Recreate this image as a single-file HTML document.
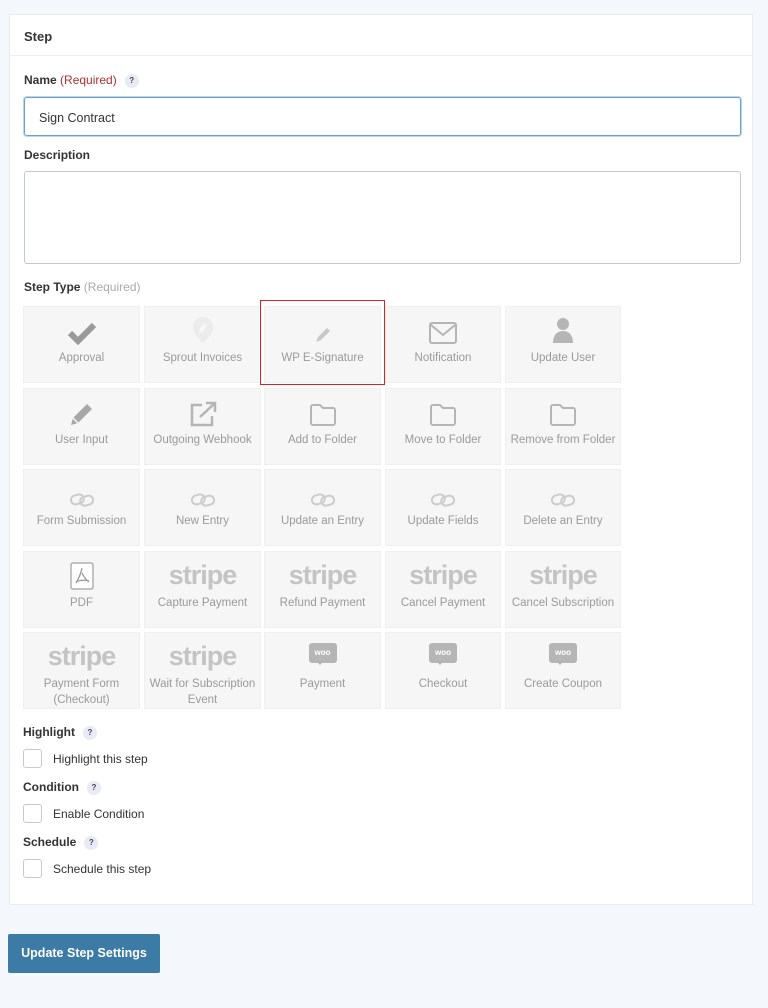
<!DOCTYPE html>
<html><head><style>
body{margin:0;background:#f4f7fb;font-family:"Liberation Sans",sans-serif;width:768px;height:1008px;position:relative;overflow:hidden;color:#333}
.card{position:absolute;left:9px;top:14px;width:744px;height:891px;background:#fff;border:1px solid #e8ebef;box-sizing:border-box}
.hdr{position:absolute;left:14px;top:14px;font-size:13px;font-weight:bold;color:#333}
.sep{position:absolute;left:0;right:0;top:40px;border-top:1px solid #eceef1}
.lbl{position:absolute;left:14px;font-size:12px;font-weight:bold;color:#333}
.q{display:inline-block;width:14px;height:14px;border-radius:7px;background:#e8eaf4;color:#445;font-size:8px;text-align:center;line-height:14px;margin-left:8px;vertical-align:1px}
.inp{position:absolute;left:14px;width:717px;border:1px solid #c3c8d0;border-radius:3px;box-sizing:border-box}
.tile{position:absolute;width:117px;height:77px;background:#f6f6f6;border:1px solid #efefef;box-sizing:border-box;text-align:center;color:#9a9a9a;font-size:11.5px}
.tile .ic{height:38px;display:flex;align-items:flex-end;justify-content:center}
.tile .t{margin-top:5px;line-height:16px}
.stripe{font-weight:bold;font-size:27px;color:#c4c4c4;letter-spacing:-1px;line-height:30px}
.woo{width:28px;height:20px;background:#b5b5b5;border-radius:3px;color:#fff;font-size:8px;line-height:20px;font-weight:bold;margin-bottom:8px;position:relative}
.woo:after{content:"";position:absolute;left:8px;bottom:-5px;border:3px solid transparent;border-top:3px solid #b5b5b5}
.cb{position:absolute;left:14px;width:19px;height:19px;border:1px solid #c8c8d0;border-radius:3px;box-sizing:border-box;background:#fff}
.cbl{position:absolute;left:44px;font-size:12px;color:#333}
.btn{position:absolute;left:8px;top:934px;width:152px;height:39px;background:#3b7ba6;border-radius:2px;color:#fff;font-weight:bold;font-size:12.5px;text-align:center;line-height:39px}
</style></head><body>
<div class="card">
<div class="hdr">Step</div><div class="sep"></div>
<div class="lbl" style="top:58px">Name <span style="color:#b03030;font-weight:normal">(Required)</span><span class="q">?</span></div>
<div class="inp" style="top:82px;height:39px;border:1px solid #6aa0cc;box-shadow:0 0 0 1px #bcd6ec;font-size:12.5px;padding:13px 0 0 14px;color:#333">Sign Contract</div>
<div class="lbl" style="top:133px">Description</div>
<div class="inp" style="top:156px;height:93px"></div>
<div class="lbl" style="top:265px">Step Type <span style="color:#aaa;font-weight:normal">(Required)</span></div>
</div>
<div style="position:absolute;left:260px;top:300px;width:125px;height:85px;border:1.5px solid #e02020;box-sizing:border-box;z-index:2"></div>
<div id="g"></div>
<script>
var cols=[23,144,264,385,505],rows=[306,388,469,551,632];
var g='#b5b5b5';
var I={
chk:'<svg width="30" height="24" viewBox="0 0 30 24"><path d="M3 12l8 8L27 4" stroke="#9a9a9a" stroke-width="6" fill="none"/></svg>',
sprout:'<svg width="24" height="30" viewBox="0 0 24 30"><path d="M12 2a10 10 0 0 1 10 10c0 8-10 16-10 16S2 20 2 12A10 10 0 0 1 12 2z" fill="#ececec"/><path d="M8 18c0-6 4-9 8-10-1 5-3 9-8 10z" fill="#f7f7f7"/></svg>',
pen2:'<svg width="20" height="20" viewBox="0 0 20 20"><path d="M3 17l2-5 9-9 3 3-9 9z" fill="#c8c8c8"/></svg>',
mail:'<svg width="30" height="24" viewBox="0 0 30 24"><rect x="2" y="2" width="26" height="20" rx="2" fill="none" stroke="'+g+'" stroke-width="2"/><path d="M3 4l12 10 12-10" fill="none" stroke="'+g+'" stroke-width="2"/></svg>',
user:'<svg width="24" height="28" viewBox="0 0 24 28"><circle cx="12" cy="7" r="6" fill="'+g+'"/><path d="M2 26c0-8 4-12 10-12s10 4 10 12z" fill="'+g+'"/></svg>',
pen:'<svg width="26" height="26" viewBox="0 0 26 26"><path d="M2 24l2-7L18 3l5 5L9 22z" fill="#a8a8a8"/><path d="M4 17l5 5" stroke="#f6f6f6" stroke-width="1.5"/></svg>',
ext:'<svg width="30" height="26" viewBox="0 0 30 26"><path d="M14 4H4v20h20V15" fill="none" stroke="'+g+'" stroke-width="2.5"/><path d="M12 16L26 3M18 2h9v9" fill="none" stroke="'+g+'" stroke-width="2.5"/></svg>',
fold:'<svg width="28" height="24" viewBox="0 0 28 24"><path d="M2 4a2 2 0 0 1 2-2h7l3 3h10a2 2 0 0 1 2 2v13a2 2 0 0 1-2 2H4a2 2 0 0 1-2-2z" fill="none" stroke="'+g+'" stroke-width="2"/></svg>',
link:'<svg width="26" height="16" viewBox="0 0 26 16"><rect x="2" y="3" width="13" height="9" rx="4.5" fill="none" stroke="#ccc" stroke-width="2" transform="rotate(-15 8 8)"/><rect x="11" y="4" width="13" height="9" rx="4.5" fill="none" stroke="#ccc" stroke-width="2" transform="rotate(-15 18 8)"/></svg>',
pdf:'<svg width="24" height="28" viewBox="0 0 24 28"><rect x="1" y="1" width="22" height="26" rx="2" fill="#fff" stroke="#b0b0b0" stroke-width="1.5"/><path d="M12 6c-1 5-3 10-6 15M12 11c2 4 4 7 7 9M6 20c4-2 9-2 13-1" fill="none" stroke="#999" stroke-width="1.3"/></svg>',
stripe:'<div class="stripe">stripe</div>',
woo:'<div class="woo">woo</div>'};
var T=[['chk','Approval'],['sprout','Sprout Invoices'],['pen2','WP E-Signature'],['mail','Notification'],['user','Update User'],
['pen','User Input'],['ext','Outgoing Webhook'],['fold','Add to Folder'],['fold','Move to Folder'],['fold','Remove from Folder'],
['link','Form Submission'],['link','New Entry'],['link','Update an Entry'],['link','Update Fields'],['link','Delete an Entry'],
['pdf','PDF'],['stripe','Capture Payment'],['stripe','Refund Payment'],['stripe','Cancel Payment'],['stripe','Cancel Subscription'],
['stripe','Payment Form<br>(Checkout)'],['stripe','Wait for Subscription<br>Event'],['woo','Payment'],['woo','Checkout'],['woo','Create Coupon']];
var h='';T.forEach(function(t,i){var r=Math.floor(i/5),c=i%5;var w=(c==3||c==4)?116:117;
h+='<div class="tile" style="left:'+cols[c]+'px;top:'+rows[r]+'px;width:'+w+'px"><div class="ic">'+I[t[0]]+'</div><div class="t">'+t[1]+'</div></div>';});
document.getElementById('g').innerHTML=h;
</script>
<div class="lbl" style="top:725px;left:23px">Highlight<span class="q">?</span></div>
<div class="cb" style="top:749px;left:23px"></div><div class="cbl" style="top:752px;left:53px">Highlight this step</div>
<div class="lbl" style="top:780px;left:23px">Condition<span class="q">?</span></div>
<div class="cb" style="top:804px;left:23px"></div><div class="cbl" style="top:807px;left:53px">Enable Condition</div>
<div class="lbl" style="top:835px;left:23px">Schedule<span class="q">?</span></div>
<div class="cb" style="top:859px;left:23px"></div><div class="cbl" style="top:862px;left:53px">Schedule this step</div>
<div class="btn">Update Step Settings</div>
</body></html>
